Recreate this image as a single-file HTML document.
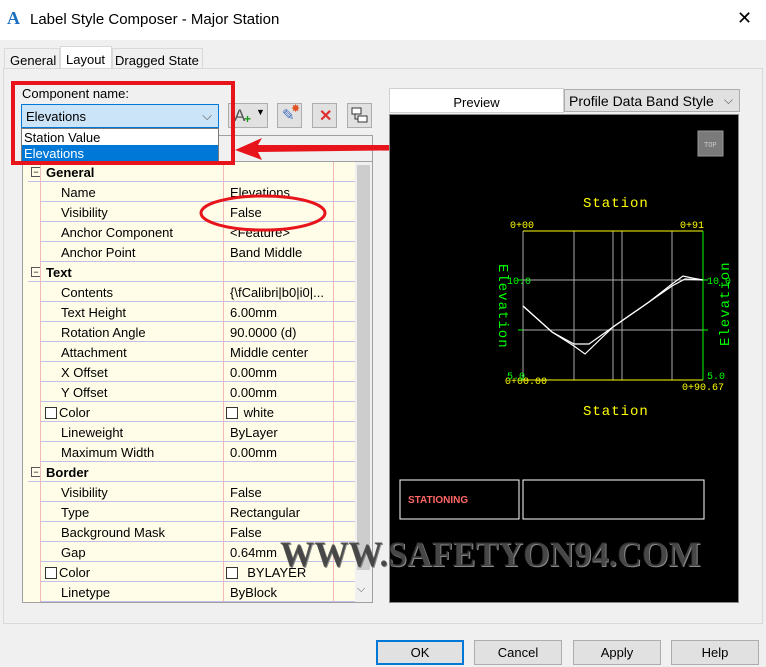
<!DOCTYPE html>
<html><head><meta charset="utf-8"><style>
*{margin:0;padding:0;box-sizing:border-box}
body{width:766px;height:667px;background:#f0f0f0;font-family:"Liberation Sans",sans-serif;font-size:13px;color:#000;position:relative;overflow:hidden}
.a{position:absolute}
.row{position:absolute;left:40px;width:315px;height:20px;background:#fffde8;border-bottom:1px solid #c0c0ec}
.row span{position:absolute;top:3px}
.n{left:21px}.v{left:190px}
.cat{position:absolute;left:28px;width:327px;height:20px;background:#fffde8;border-bottom:1px solid #c0c0ec;font-weight:bold}
.cat b{position:absolute;left:18px;top:3px}
.pm{position:absolute;left:3px;top:5px;width:10px;height:10px;border:1px solid #555;font-size:9px;line-height:8px;text-align:center;font-weight:normal}
.btn{position:absolute;top:640px;width:88px;height:25px;background:#e1e1e1;border:1px solid #adadad;text-align:center;line-height:23px}
.tb{position:absolute;top:103px;width:25px;height:25px;background:#e1e1e1;border:1px solid #adadad}
.cb{display:inline-block;width:12px;height:12px;border:1px solid #333;background:#fff;vertical-align:-2px;margin-right:2px}
</style></head><body>
<div class="a" style="left:0;top:0;width:766px;height:40px;background:#fff"></div>
<div class="a" style="left:7px;top:8px;font-size:18px;font-weight:bold;color:#1a6fc0;font-family:'Liberation Serif',serif">A</div>
<div class="a" style="left:30px;top:11px;font-size:15px">Label Style Composer - Major Station</div>
<div class="a" style="left:737px;top:8px;font-size:18px">✕</div>
<div class="a" style="left:4px;top:48px;width:56px;height:21px;border:1px solid #d9d9d9;border-bottom:none;background:#f0f0f0;padding:4px 0 0 5px">General</div>
<div class="a" style="left:60px;top:46px;width:52px;height:23px;border:1px solid #d9d9d9;border-bottom:none;background:#fff;padding:5px 0 0 5px">Layout</div>
<div class="a" style="left:112px;top:48px;width:91px;height:21px;border:1px solid #d9d9d9;border-bottom:none;background:#f0f0f0;padding:4px 0 0 2px">Dragged State</div>
<div class="a" style="left:3px;top:68px;width:760px;height:556px;border:1px solid #d9d9d9;background:#f0f0f0"></div>
<div class="a" style="left:22px;top:86px">Component name:</div>
<div class="a" style="left:21px;top:104px;width:198px;height:24px;background:#cce4f7;border:1px solid #0078d7;padding:4px 0 0 4px">Elevations<span style="position:absolute;right:6px;top:3px;color:#555">⌵</span></div>
<div class="tb" style="left:228px;width:40px"><span style="position:absolute;left:5px;top:2px;font-size:17px;color:#555">A</span><span style="position:absolute;left:15px;top:8px;color:#1a9a1a;font-weight:bold;font-size:12px">+</span><span style="position:absolute;left:27px;top:3px;font-size:9px">▼</span></div>
<div class="tb" style="left:277px"><span style="position:absolute;left:4px;top:2px;font-size:15px;color:#4070c0">✎</span><span style="position:absolute;left:13px;top:-2px;color:#e05020;font-size:11px">✸</span></div>
<div class="tb" style="left:312px"><span style="position:absolute;left:6px;top:2px;font-size:16px;color:#e03030;font-weight:bold">✕</span></div>
<div class="tb" style="left:347px"><svg width="23" height="23" class="a" style="left:0;top:0"><rect x="4" y="4" width="9" height="6" fill="#fff" stroke="#333"/><rect x="10" y="12" width="9" height="6" fill="#fff" stroke="#333"/><path d="M7 10v5h3" fill="none" stroke="#333"/></svg></div>
<div class="a" style="left:22px;top:135px;width:351px;height:468px;border:1px solid #a0a0a0;background:#fffde8"></div>
<div class="a" style="left:23px;top:136px;width:349px;height:26px;background:#f0f0f0;border-bottom:1px solid #a0a0a0"></div>
<div class="a" style="left:355px;top:162px;width:17px;height:440px;background:#f0f0f0"></div>
<div class="a" style="left:357px;top:165px;width:13px;height:405px;background:#cdcdcd"></div>
<div class="a" style="left:357px;top:583px;font-size:11px;color:#555">⌵</div>
<div class="cat" style="top:162px"><span class="pm">−</span><b>General</b></div>
<div class="row" style="top:182px"><span class="n">Name</span><span class="v">Elevations</span></div>
<div class="row" style="top:202px"><span class="n">Visibility</span><span class="v">False</span></div>
<div class="row" style="top:222px"><span class="n">Anchor Component</span><span class="v">&lt;Feature&gt;</span></div>
<div class="row" style="top:242px"><span class="n">Anchor Point</span><span class="v">Band Middle</span></div>
<div class="cat" style="top:262px"><span class="pm">−</span><b>Text</b></div>
<div class="row" style="top:282px"><span class="n">Contents</span><span class="v">{\fCalibri|b0|i0|...</span></div>
<div class="row" style="top:302px"><span class="n">Text Height</span><span class="v">6.00mm</span></div>
<div class="row" style="top:322px"><span class="n">Rotation Angle</span><span class="v">90.0000 (d)</span></div>
<div class="row" style="top:342px"><span class="n">Attachment</span><span class="v">Middle center</span></div>
<div class="row" style="top:362px"><span class="n">X Offset</span><span class="v">0.00mm</span></div>
<div class="row" style="top:382px"><span class="n">Y Offset</span><span class="v">0.00mm</span></div>
<div class="row" style="top:402px"><span style="left:5px;top:3px"><i class="cb"></i>Color</span><span class="v" style="left:186px"><i class="cb"></i> white</span></div>
<div class="row" style="top:422px"><span class="n">Lineweight</span><span class="v">ByLayer</span></div>
<div class="row" style="top:442px"><span class="n">Maximum Width</span><span class="v">0.00mm</span></div>
<div class="cat" style="top:462px"><span class="pm">−</span><b>Border</b></div>
<div class="row" style="top:482px"><span class="n">Visibility</span><span class="v">False</span></div>
<div class="row" style="top:502px"><span class="n">Type</span><span class="v">Rectangular</span></div>
<div class="row" style="top:522px"><span class="n">Background Mask</span><span class="v">False</span></div>
<div class="row" style="top:542px"><span class="n">Gap</span><span class="v">0.64mm</span></div>
<div class="row" style="top:562px"><span style="left:5px;top:3px"><i class="cb"></i>Color</span><span class="v" style="left:186px"><i class="cb"></i>&nbsp; BYLAYER</span></div>
<div class="row" style="top:582px"><span class="n">Linetype</span><span class="v">ByBlock</span></div>
<div class="a" style="left:40px;top:162px;width:1px;height:440px;background:#f0b8b8"></div>
<div class="a" style="left:223px;top:162px;width:1px;height:440px;background:#f0b8b8"></div>
<div class="a" style="left:333px;top:162px;width:1px;height:440px;background:#f0b8b8"></div>
<div class="a" style="left:21px;top:128px;width:198px;height:35px;background:#fff;border:1px solid #7a7a7a"></div>
<div class="a" style="left:24px;top:130px">Station Value</div>
<div class="a" style="left:22px;top:145px;width:196px;height:17px;background:#0078d7;color:#fff;padding:1px 0 0 2px">Elevations</div>
<div class="a" style="left:11px;top:81px;width:224px;height:84px;border:4px solid #e8141c"></div>
<svg class="a" style="left:0;top:0" width="766" height="667">
<path d="M235 150 L262 138 L258 145 L430 145 L430 150 L258 152 L262 160 Z" fill="#e8141c"/>
<ellipse cx="263" cy="213" rx="62" ry="17" fill="none" stroke="#e8141c" stroke-width="3"/>
</svg>
<div class="a" style="left:389px;top:88px;width:175px;height:25px;background:#fff;border:1px solid #d0d0d0;text-align:center;padding-top:6px">Preview</div>
<div class="a" style="left:564px;top:89px;width:176px;height:23px;background:#e1e1e1;border:1px solid #adadad;padding:3px 0 0 4px;font-size:14px">Profile Data Band Style<span style="position:absolute;right:6px;top:3px;color:#555;font-size:12px">⌵</span></div>
<div class="a" style="left:389px;top:114px;width:350px;height:489px;background:#000;border:1px solid #888"></div>
<svg class="a" style="left:389px;top:114px" width="350" height="489" font-family="Liberation Mono,monospace">
<rect x="309" y="17" width="25" height="25" fill="#7a7a7a" stroke="#999"/><text x="315" y="33" font-size="7" fill="#ccc">TOP</text>
<text x="194" y="93" font-size="14" fill="#ff0" letter-spacing="1">Station</text>
<text x="121" y="114" font-size="10" fill="#ff0">0+00</text><text x="291" y="114" font-size="10" fill="#ff0">0+91</text>
<g stroke="#aaa" stroke-width="1" fill="none">
<path d="M134 117V266M185 117V266M224 117V266M233 117V266M283 117V266M134 166H314M134 216H314"/>
</g>
<path d="M134 117H314M134 266H314" stroke="#ff0"/>
<path d="M314 117V266" stroke="#0f0"/>
<path d="M129 166h5M129 216h5M129 266h5M314 166h5M314 216h5" stroke="#0f0"/>
<g stroke="#fff" fill="none" stroke-width="1.2">
<path d="M134 192 L163 218 L185 232 L196 240 L224 213 L260 188 L283 170 L294 162 L303 164 L314 166"/>
<path d="M134 192 L163 218 L185 230 L200 230 L224 213 L260 188 L283 172 L296 165 L314 166"/>
</g>
<text x="116" y="270" font-size="10" fill="#ff0">0+00.00</text><text x="293" y="276" font-size="10" fill="#ff0">0+90.67</text>
<text x="118" y="270" font-size="10" fill="#0f0" dy="-5">5.0</text><text x="318" y="270" font-size="10" fill="#0f0" dy="-5">5.0</text>
<text x="118" y="170" font-size="10" fill="#0f0">10.0</text><text x="318" y="170" font-size="10" fill="#0f0">10.0</text>
<text font-size="14" fill="#0f0" transform="translate(110,150) rotate(90)" letter-spacing="1">Elevation</text>
<text font-size="14" fill="#0f0" transform="translate(340,232) rotate(-90)" letter-spacing="1">Elevation</text>
<text x="194" y="301" font-size="14" fill="#ff0" letter-spacing="1">Station</text>
<rect x="11" y="366" width="119" height="39" fill="none" stroke="#fff"/>
<rect x="134" y="366" width="181" height="39" fill="none" stroke="#fff"/>
<text x="19" y="389" font-size="10" fill="#f66" font-family="Liberation Sans" font-weight="bold">STATIONING</text>
</svg>
<div class="a" style="left:280px;top:533px;font-family:'Liberation Serif',serif;font-weight:bold;font-size:36px;color:rgba(60,60,60,.85);letter-spacing:0px;transform:scaleX(0.95);transform-origin:left;text-shadow:1px 1px 0 #888">WWW.SAFETYON94.COM</div>
<div class="btn" style="left:376px;border:2px solid #0078d7;line-height:21px">OK</div>
<div class="btn" style="left:474px">Cancel</div>
<div class="btn" style="left:573px">Apply</div>
<div class="btn" style="left:671px">Help</div>
</body></html>
